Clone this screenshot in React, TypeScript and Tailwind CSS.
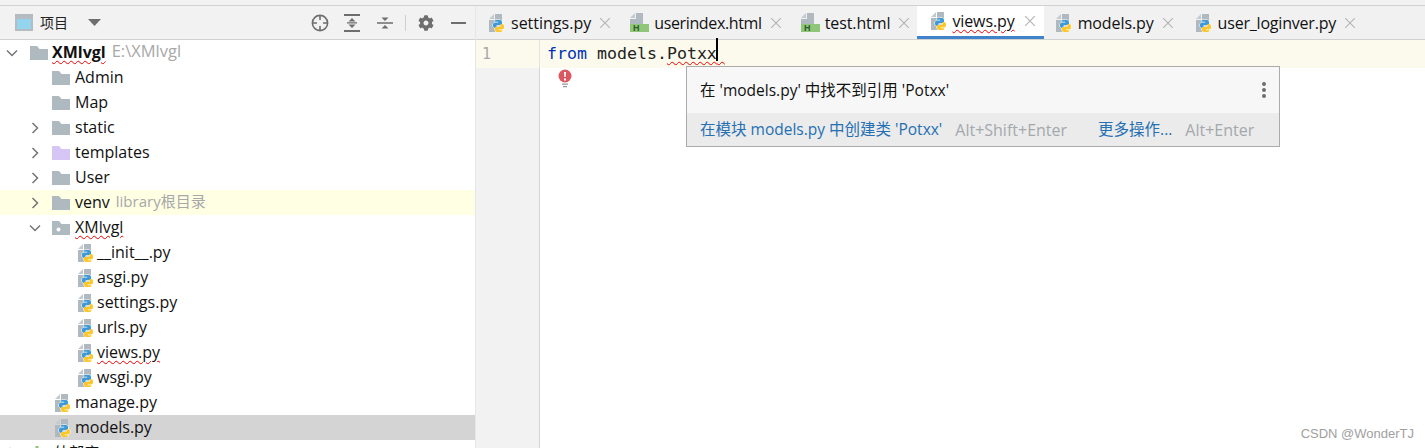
import { FaCog } from 'react-icons/fa'

const uiFont = "font-['Open_Sans','Noto_Sans_CJK_SC',sans-serif]"

const snake =
    'M7 6h4a2 2 0 0 1 2 2v3H8.5a1 1 0 0 0-1 1v2H6a2 2 0 0 1-2-2v-1.5a2 2 0 0 1 2-2h3.2V7.8H5.6V7.5A1.5 1.5 0 0 1 7 6z'

function PyIcon() {
    return (
        <svg width="16" height="18" viewBox="0 0 16 18" className="shrink-0">
            <path d="M5 0v5H0z" fill="#c4cbd0" />
            <path d="M6 0h7v6H6zM0 6h13v12H0z" fill="#b0b9c0" />
            <path d={snake} fill="#fff" stroke="#fff" strokeWidth="1" />
            <path d={snake} fill="#fff" stroke="#fff" strokeWidth="1" transform="rotate(180 9.5 12)" />
            <path d={snake} fill="#3d9ad6" />
            <path d={snake} fill="#fcc72b" transform="rotate(180 9.5 12)" />
        </svg>
    )
}

function HtmlIcon() {
    return (
        <svg width="19" height="19" viewBox="0 0 19 19" className="shrink-0">
            <path d="M5 0v5H0z" fill="#c4cbd0" />
            <path d="M6 0h7v6H6zM0 6h13v5H0z" fill="#b0b9c0" />
            <path d="M0 11h19v8H0z" fill="#90c67a" />
            <text x="3" y="18" fontSize="9" fontWeight="700" fill="#2f5b2b" fontFamily="Liberation Sans, sans-serif">
                H
            </text>
        </svg>
    )
}

function FolderIcon({ color = '#aeb9c0', dot = false }: { color?: string; dot?: boolean }) {
    return (
        <svg width="18" height="14" viewBox="0 0 18 14" className="shrink-0">
            <path d="M0 0h7l2.5 3H18v11H0z" fill={color} />
            {dot && <circle cx="6.5" cy="8.5" r="2" fill="#fff" />}
        </svg>
    )
}

function Chevron({ open }: { open: boolean }) {
    return (
        <div className="flex h-4 w-4 items-center justify-center">
            <svg width="12" height="12" viewBox="0 0 12 12" fill="none" stroke="#757575" strokeWidth="1.5">
                {open ? <path d="M1 3.5l5 5 5-5" /> : <path d="M3.5 1l5 5-5 5" />}
            </svg>
        </div>
    )
}

function CloseX() {
    return (
        <svg width="10" height="10" viewBox="0 0 10 10" stroke="#b4b4b4" strokeWidth="1.1" className="shrink-0">
            <path d="M0 0l10 10M10 0L0 10" />
        </svg>
    )
}

type TreeRow = {
    name: string
    gutter: string
    gap: string
    chevron?: 'open' | 'closed'
    kind: 'folder' | 'purple' | 'package' | 'py'
    bold?: boolean
    wavy?: boolean
    hint?: string
    hintClass?: string
    rowBg?: string
}

const rows: TreeRow[] = [
    { name: 'XMlvgl', gutter: 'w-[30px] pr-[10px]', gap: 'ml-[4px]', chevron: 'open', kind: 'folder', bold: true, wavy: true, hint: 'E:\\XMlvgl', hintClass: 'text-[16.5px]' },
    { name: 'Admin', gutter: 'w-[52px] pr-[9px]', gap: 'ml-[5px]', kind: 'folder' },
    { name: 'Map', gutter: 'w-[52px] pr-[9px]', gap: 'ml-[5px]', kind: 'folder' },
    { name: 'static', gutter: 'w-[52px] pr-[9px]', gap: 'ml-[5px]', chevron: 'closed', kind: 'folder' },
    { name: 'templates', gutter: 'w-[52px] pr-[9px]', gap: 'ml-[5px]', chevron: 'closed', kind: 'purple' },
    { name: 'User', gutter: 'w-[52px] pr-[9px]', gap: 'ml-[5px]', chevron: 'closed', kind: 'folder' },
    { name: 'venv', gutter: 'w-[52px] pr-[9px]', gap: 'ml-[5px]', chevron: 'closed', kind: 'folder', hint: 'library根目录', hintClass: 'text-[15px]', rowBg: 'bg-[#ffffe4]' },
    { name: 'XMlvgl', gutter: 'w-[52px] pr-[9px]', gap: 'ml-[5px]', chevron: 'open', kind: 'package', wavy: true },
    { name: '__init__.py', gutter: 'w-[78px]', gap: 'ml-[3px]', kind: 'py' },
    { name: 'asgi.py', gutter: 'w-[78px]', gap: 'ml-[3px]', kind: 'py' },
    { name: 'settings.py', gutter: 'w-[78px]', gap: 'ml-[3px]', kind: 'py' },
    { name: 'urls.py', gutter: 'w-[78px]', gap: 'ml-[3px]', kind: 'py' },
    { name: 'views.py', gutter: 'w-[78px]', gap: 'ml-[3px]', kind: 'py', wavy: true },
    { name: 'wsgi.py', gutter: 'w-[78px]', gap: 'ml-[3px]', kind: 'py' },
    { name: 'manage.py', gutter: 'w-[55px]', gap: 'ml-[4px]', kind: 'py' },
    { name: 'models.py', gutter: 'w-[55px]', gap: 'ml-[4px]', kind: 'py', rowBg: 'bg-[#d4d4d4]' },
]

const wavyClass = 'underline decoration-wavy decoration-[#f00000] decoration-1 underline-offset-2'

function Row({ row }: { row: TreeRow }) {
    return (
        <div className={`flex h-[25px] items-center ${row.rowBg ?? ''}`}>
            <div className={`flex shrink-0 justify-end ${row.gutter}`}>
                {row.chevron && <Chevron open={row.chevron === 'open'} />}
            </div>
            {row.kind === 'py' && <PyIcon />}
            {row.kind === 'folder' && <FolderIcon />}
            {row.kind === 'purple' && <FolderIcon color="#d5c6f5" />}
            {row.kind === 'package' && <FolderIcon dot />}
            <span className={`${row.gap} mb-[2px] text-[#111] ${row.bold ? 'font-bold' : ''} ${row.wavy ? wavyClass : ''}`}>
                {row.name}
            </span>
            {row.hint && <span className={`mb-[2px] ml-[6px] text-[#a8a8a8] ${row.hintClass ?? ''}`}>{row.hint}</span>}
        </div>
    )
}

function Sidebar() {
    return (
        <div className="flex w-[476px] shrink-0 flex-col border-r border-[#e6e6e6]">
            <div className="flex h-[34px] shrink-0 items-center border-b border-[#d1d1d1] bg-[#f2f2f2] pl-[15px]">
                <svg width="18" height="17" viewBox="0 0 18 17" className="shrink-0">
                    <rect width="18" height="17" fill="#b4bcc2" />
                    <rect x="2" y="5" width="14" height="10" fill="#95d4ef" />
                </svg>
                <span className="ml-[7px] text-[14px] whitespace-nowrap text-[#222]">项目</span>
                <svg width="13" height="7" viewBox="0 0 13 7" className="ml-[20px] shrink-0">
                    <path d="M0 0h13L6.5 7z" fill="#6e6e6e" />
                </svg>
                <div className="ml-[210px] flex items-center">
                    <svg width="18" height="18" viewBox="0 0 18 18" fill="none" stroke="#6e6e6e" strokeWidth="1.6">
                        <circle cx="9" cy="9" r="7.6" />
                        <path d="M9 1v5M9 12v5M1 9h5M12 9h5" />
                    </svg>
                    <svg width="16" height="18" viewBox="0 0 16 18" className="ml-[15px]" fill="#6e6e6e">
                        <path d="M0 0h16v2H0zM0 16h16v2H0zM8 4l3.5 3.5h-7zM8 14l-3.5-3.5h7zM3 8.2h10v1.4H3z" />
                    </svg>
                    <svg width="16" height="16" viewBox="0 0 16 16" className="ml-[17px]" fill="#6e6e6e">
                        <path d="M0 7.2h16v1.6H0zM8 6L4.5 2.5h7zM8 10l3.5 3.5h-7z" />
                    </svg>
                    <div className="ml-[12px] h-[16px] w-px bg-[#cfcfcf]" />
                    <FaCog className="ml-[12px] text-[#6e6e6e]" size={16} />
                    <div className="ml-[17px] h-[2px] w-[15px] bg-[#6e6e6e]" />
                </div>
            </div>
            <div className="flex-1 overflow-hidden bg-white">
                {rows.map((row, i) => (
                    <Row key={i} row={row} />
                ))}
                <div className="flex h-[25px] items-center">
                    <div className="flex w-[30px] shrink-0 justify-end pr-[10px]">
                        <Chevron open={false} />
                    </div>
                    <svg width="16" height="14" viewBox="0 0 16 14" className="shrink-0">
                        <path d="M1 3h3v11H1zM10 3h3v11h-3z" fill="#b0b9c0" />
                        <path d="M5.5 0h3v14h-3z" fill="#8fc475" />
                    </svg>
                    <span className="ml-[8px] text-[15px] text-[#111]">外部库</span>
                </div>
            </div>
        </div>
    )
}

const tabs = [
    { name: 'settings.py', icon: 'py', pad: 'pl-[13px] pr-[9px]', gap: 'ml-[6px]', xGap: 'ml-[9px]', track: '' },
    { name: 'userindex.html', icon: 'html', pad: 'pl-[11px] pr-[9px]', gap: 'ml-[5px]', xGap: 'ml-[9px]', track: 'tracking-[-0.36px]' },
    { name: 'test.html', icon: 'html', pad: 'pl-[11px] pr-[8px]', gap: 'ml-[5px]', xGap: 'ml-[9px]', track: 'tracking-[-0.1px]' },
    { name: 'views.py', icon: 'py', pad: 'pl-[14px] pr-[9px]', gap: 'ml-[5px]', xGap: 'ml-[10px]', track: 'tracking-[-0.1px]', active: true, wavy: true },
    { name: 'models.py', icon: 'py', pad: 'pl-[12px] pr-[11px]', gap: 'ml-[6px]', xGap: 'ml-[9px]', track: 'tracking-[-0.1px]' },
    { name: 'user_loginver.py', icon: 'py', pad: 'pl-[12px] pr-[9px]', gap: 'ml-[6px]', xGap: 'ml-[9px]', track: 'tracking-[-0.2px]' },
]

function TabBar() {
    return (
        <div className="flex h-[34px] shrink-0 border-b border-[#d1d1d1] bg-[#f1f1f1]">
            {tabs.map((tab) => (
                <div
                    key={tab.name}
                    className={`flex items-center ${tab.pad} ${tab.active ? 'border-b-[3px] border-[#4083c9] bg-white' : ''}`}
                >
                    {tab.icon === 'py' ? <PyIcon /> : <HtmlIcon />}
                    <span className={`${tab.gap} ${tab.track} text-[#111] ${tab.wavy ? wavyClass : ''}`}>{tab.name}</span>
                    <div className={tab.xGap}>
                        <CloseX />
                    </div>
                </div>
            ))}
        </div>
    )
}

function Editor() {
    return (
        <div className="relative flex min-w-0 flex-1 flex-col">
            <TabBar />
            <div className="flex h-[28px] shrink-0 items-center bg-[#fcfaed] font-['DejaVu_Sans_Mono',monospace] text-[16.6px]">
                <div className="w-[63px] shrink-0 pl-[6px] text-[15px] text-[#a8a8a8]">1</div>
                <div className="w-px self-stretch bg-[#e3e3e3]" />
                <div className="relative ml-[7px] whitespace-pre text-[#222]">
                    <span className="text-[#0033b3]">from</span> models.
                    <span className={wavyClass}>
                        Potxx<span className="tracking-[-2px]">{'\u00a0'}</span>
                    </span>
                    <div className="absolute top-[-4px] left-[169px] h-[23px] w-[2px] bg-black" />
                </div>
            </div>
            <div className="flex flex-1">
                <div className="w-[63px] shrink-0 bg-[#f2f2f2]" />
                <div className="w-px bg-[#d5d5d5]" />
                <div className="flex-1 bg-white" />
            </div>

            {/* error bulb */}
            <svg width="16" height="19" viewBox="0 0 16 19" className="absolute top-[63px] left-[81px]">
                <circle cx="8" cy="7" r="6.5" fill="#db5860" />
                <path d="M7 3h2l-.3 5H7.3zM7 9.5h2v2H7z" fill="#fff" />
                <path d="M5 14.5h6v1.3H5zM6 17h4v1.3H6z" fill="#9a9a9a" />
            </svg>

            {/* quick fix popup */}
            <div className="absolute top-[60px] left-[210px] flex h-[81px] w-[594px] flex-col border border-[#ababab] text-[15.5px]">
                <div className="flex h-[46px] shrink-0 items-center justify-between bg-[#f7f7f7] pt-[2px] pr-[13px] pl-[13px] text-[#111]">
                    <span>在 'models.py' 中找不到引用 'Potxx'</span>
                    <div className="mb-[2px] flex flex-col gap-[2px]">
                        <div className="h-[4px] w-[4px] rounded-full bg-[#6e6e6e]" />
                        <div className="h-[4px] w-[4px] rounded-full bg-[#6e6e6e]" />
                        <div className="h-[4px] w-[4px] rounded-full bg-[#6e6e6e]" />
                    </div>
                </div>
                <div className="flex flex-1 items-center bg-[#ebebeb] pt-[1px] pl-[13px]">
                    <span className="text-[#2470b3]">在模块 models.py 中创建类 'Potxx'</span>
                    <span className="ml-[13px] text-[16px] text-[#a3a8ad]">Alt+Shift+Enter</span>
                    <span className="ml-[31px] text-[#2470b3]">更多操作...</span>
                    <span className="ml-[13px] text-[16px] text-[#a3a8ad]">Alt+Enter</span>
                </div>
            </div>
        </div>
    )
}

export default function App() {
    return (
        <div className={`relative flex h-[448px] w-[1425px] flex-col overflow-hidden bg-white text-[16px] ${uiFont}`}>
            <div className="h-[6px] shrink-0 border-b border-[#d1d1d1] bg-[#f2f2f2]" />
            <div className="flex min-h-0 flex-1">
                <Sidebar />
                <Editor />
            </div>
            <span className="absolute right-[11px] bottom-[5px] font-['Liberation_Sans',sans-serif] text-[13px] text-[#a0a0a0]">
                CSDN @WonderTJ
            </span>
        </div>
    )
}
